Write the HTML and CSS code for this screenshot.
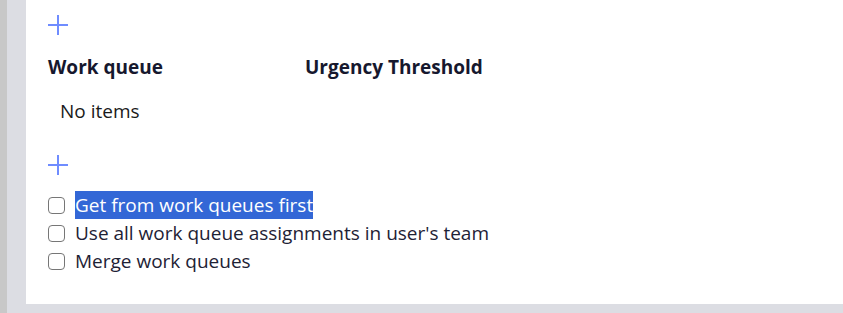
FILE: index.html
```html
<!DOCTYPE html>
<html>
<head>
<meta charset="utf-8">
<link rel="stylesheet" href="styles.css">
</head>
<body>
<div class="frame">
  <div class="panel">
    <button class="add" aria-label="Add">
      <svg width="20" height="20" viewBox="0 0 20 20"><path d="M10 0V20M0 10H20" stroke="#6f8cff" stroke-width="2" fill="none"/></svg>
    </button>
    <div class="table-head">
      <div class="col col-queue">Work queue</div>
      <div class="col">Urgency Threshold</div>
    </div>
    <div class="empty">No items</div>
    <button class="add add-2" aria-label="Add">
      <svg width="20" height="20" viewBox="0 0 20 20"><path d="M10 0V20M0 10H20" stroke="#6f8cff" stroke-width="2" fill="none"/></svg>
    </button>
    <div class="options">
      <label class="opt"><span class="box"></span><span class="lbl selected">Get from work queues first</span></label>
      <label class="opt"><span class="box"></span><span class="lbl">Use all work queue assignments in user's team</span></label>
      <label class="opt"><span class="box"></span><span class="lbl">Merge work queues</span></label>
    </div>
  </div>
</div>
</body>
</html>
```
FILE: styles.css
```css
html, body {
  margin: 0;
  padding: 0;
}
body {
  width: 843px;
  height: 313px;
  overflow: hidden;
  background: #dcdde3;
  font-family: "Open Sans", "Liberation Sans", sans-serif;
  color: #1e2235;
}
.frame {
  height: 313px;
  border-left: 7px solid #c8c8c8;
  padding-left: 19px;
  box-sizing: border-box;
}
.panel {
  background: #ffffff;
  height: 304px;
  padding: 15px 0 0 22px;
  box-sizing: border-box;
}
.add {
  display: block;
  border: 0;
  background: none;
  padding: 0;
  width: 20px;
  height: 20px;
  cursor: pointer;
}
.add svg { display: block; }
.table-head {
  display: flex;
  margin-top: 20px;
  font-weight: 700;
  font-size: 19px;
  color: #16182e;
  line-height: 24px;
}
.col-queue { width: 257px; }
.empty {
  margin-top: 20px;
  padding-left: 12px;
  font-size: 19px;
  line-height: 24px;
  color: #1a1a1a;
}
.add-2 { margin-top: 32px; }
.options {
  margin-top: 16px;
  display: flex;
  flex-direction: column;
}
.opt {
  display: flex;
  align-items: center;
  height: 28px;
  font-size: 19px;
  color: #1e2235;
}
.box {
  width: 17px;
  height: 17px;
  border: 1.5px solid #767676;
  border-radius: 4px;
  box-sizing: border-box;
  margin-right: 10px;
  background: #fff;
}
.lbl {
  line-height: 28px;
}
.selected {
  background: #3367d6;
  color: #ffffff;
}
```
